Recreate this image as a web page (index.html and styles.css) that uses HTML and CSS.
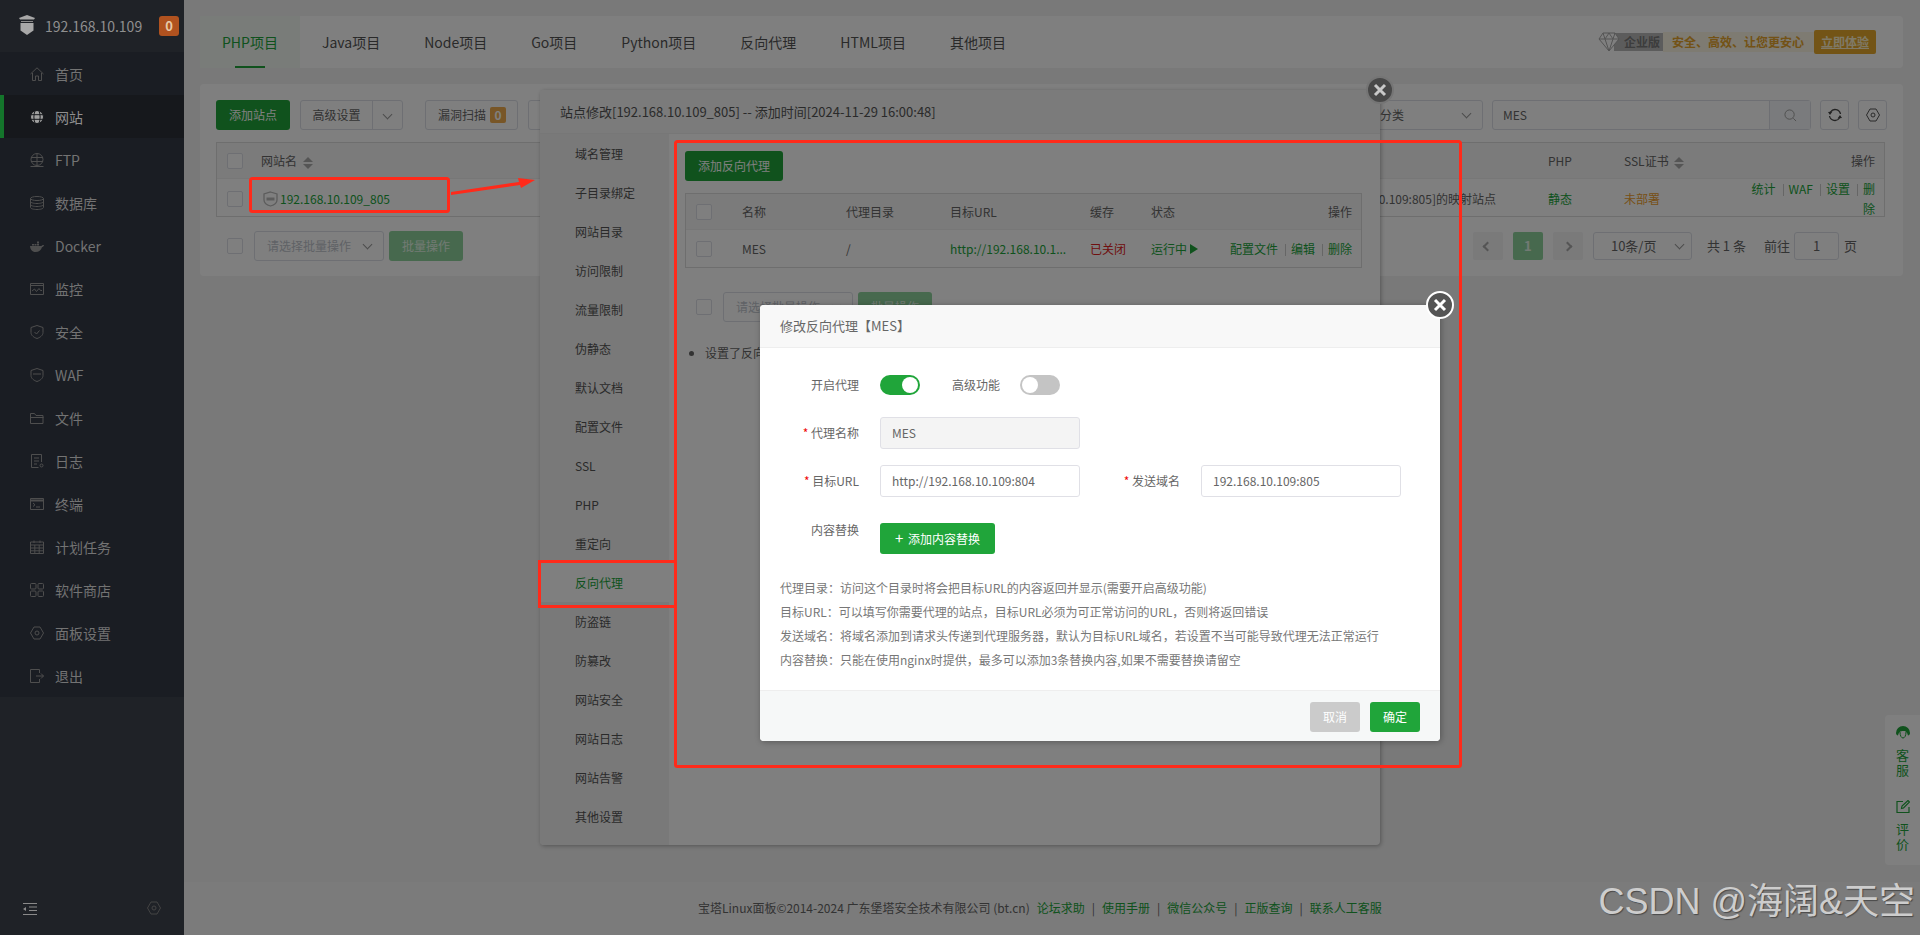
FILE: index.html
```html
<!DOCTYPE html>
<html lang="zh-CN">
<head>
    <meta charset="UTF-8">
    <title>网站管理 - 反向代理</title>
    <link rel="stylesheet" href="styles.css">
</head>
<body>
<div class="app">
    <aside class="sidebar">
        <div class="side-head">
            <svg class="logo" viewBox="0 0 18 20" width="18" height="20"><path d="M1 3 9 0l8 3-1 1.500H2z" fill="#a8a8a8"/><path d="M3 6h12v1H3z" fill="#8a8a8a"/><path d="M2.500 8h13v7.500L9 20l-6.500-4.500z" fill="#a8a8a8"/></svg>
            <span class="side-ip">192.168.10.109</span>
            <span class="side-badge">0</span>
        </div>
        <nav class="nav">
            <a class="nav-item"><svg viewBox="0 0 14 14"><path d="M.5 7 7 .8 13.500 7M2.500 6v7.500h3V9h3v4.500h3V6"/></svg>首页</a>
            <a class="nav-item active"><svg viewBox="0 0 14 14"><circle cx="7" cy="7" r="6.500" fill="currentColor"/><path d="M.5 4.700h13M.5 9.300h13M5 .8C3.500 5 3.500 9 5 13.200M9 .8c1.500 4.200 1.500 8.400 0 12.400" stroke="#16181c"/></svg>网站</a>
            <a class="nav-item"><svg viewBox="0 0 14 14"><circle cx="7" cy="6.500" r="6"/><path d="M1 4.500h12M1 8.500h12M7 .5v12M.5 13.500h13"/></svg>FTP</a>
            <a class="nav-item"><svg viewBox="0 0 14 14"><ellipse cx="7" cy="2.500" rx="6.500" ry="2"/><path d="M.5 2.500v9c0 1.100 2.900 2 6.500 2s6.500-.9 6.500-2v-9M.5 5.500c0 1.100 2.900 2 6.500 2s6.500-.9 6.500-2M.5 8.500c0 1.100 2.900 2 6.500 2s6.500-.9 6.500-2"/></svg>数据库</a>
            <a class="nav-item"><svg viewBox="0 0 14 14"><path d="M0 7h11.500c.5-1 1.200-1.300 2.500-1-.3 1.500-1 2-2 2.200C11 11 9 13 5.500 13 2 13 .3 10.500 0 7zM2 5h2v1.500H2zM4.500 5h2v1.500h-2zM7 5h2v1.500H7zM7 2.500h2V4.500H7z" fill="currentColor" stroke="none"/></svg>Docker</a>
            <a class="nav-item"><svg viewBox="0 0 14 14"><path d="M.5 1.500h13v11H.5zM.5 3.500h13M2 9l2.500-2 2 2.500L9 6.500l1.500 2H12"/></svg>监控</a>
            <a class="nav-item"><svg viewBox="0 0 14 14"><path d="M7 .5 13 2.500v5c0 3-3 5-6 6-3-1-6-3-6-6v-5z"/><path d="m4.500 7 2 2 3-3.500"/></svg>安全</a>
            <a class="nav-item"><svg viewBox="0 0 14 14"><path d="M7 .5 13 2.500v5c0 3-3 5-6 6-3-1-6-3-6-6v-5z"/><path d="M3 6h8"/></svg>WAF</a>
            <a class="nav-item"><svg viewBox="0 0 14 14"><path d="M.5 12.500v-10h4l1.500 2h7v8zM.5 6.500h13"/></svg>文件</a>
            <a class="nav-item"><svg viewBox="0 0 14 14"><path d="M11.500 8V.5h-10v13h7M4 4h5M4 7h5M4 10h3"/><circle cx="11.500" cy="11.500" r="1.500"/></svg>日志</a>
            <a class="nav-item"><svg viewBox="0 0 14 14"><path d="M.5 1.500h13v11H.5z"/><path d="M.5 3.500h13" stroke-width="2"/><path d="m3 6 2 1.800L3 9.500M6 10h4"/></svg>终端</a>
            <a class="nav-item"><svg viewBox="0 0 14 14"><path d="M.5 2h13v11.500H.5zM.5 5h13M4 .5V3M10 .5V3M.5 8h13M.5 10.800h13M4.800 5v8.500M9.200 5v8.500"/></svg>计划任务</a>
            <a class="nav-item"><svg viewBox="0 0 14 14"><rect x=".5" y=".5" width="5.500" height="5.500" rx="1"/><rect x="8" y=".5" width="5.500" height="5.500" rx="1"/><rect x=".5" y="8" width="5.500" height="5.500" rx="1"/><rect x="8" y="8" width="5.500" height="5.500" rx="1"/></svg>软件商店</a>
            <a class="nav-item"><svg viewBox="0 0 14 14"><path d="M4 1h6l3.500 6-3.500 6H4L.5 7z"/><circle cx="7" cy="7" r="2"/></svg>面板设置</a>
            <a class="nav-item"><svg viewBox="0 0 14 14"><path d="M9.500 4V.5h-9v13h9V10M6 7h7.500M11 4.500 13.500 7 11 9.500"/></svg>退出</a>
        </nav>
        <div class="side-foot">
            <svg viewBox="0 0 14 12" width="14" height="12"><path d="M0 .5h14M6 4h8M6 7.500h8M0 11.500h14" stroke="#8a8a8a" fill="none"/><path d="M3 4v4L0 6z" fill="#8a8a8a"/></svg>
            <svg viewBox="0 0 14 14" width="14" height="14"><path d="M4 1h6l3.500 6-3.500 6H4L.5 7z" stroke="#444" fill="none"/><circle cx="7" cy="7" r="2" stroke="#444" fill="none"/></svg>
        </div>
    </aside>

    <div class="main">
        <div class="content">
            <div class="tabs">
                <a class="tab active">PHP项目</a>
                <a class="tab">Java项目</a>
                <a class="tab">Node项目</a>
                <a class="tab">Go项目</a>
                <a class="tab">Python项目</a>
                <a class="tab">反向代理</a>
                <a class="tab">HTML项目</a>
                <a class="tab">其他项目</a>
                <div class="promo">
                    <svg class="promo-gem" viewBox="0 0 22 22" width="22" height="22"><path d="M5 2h12l4 6-10 12L1 8zM1 8h20M7 8l4 12 4-12M5 2l2 6 4-6 4 6 2-6" fill="#7f7f7f" stroke="#555"/></svg>
                    <span class="promo-tag">企业版</span>
                    <span class="promo-text">安全、高效、让您更安心</span>
                    <a class="promo-btn">立即体验</a>
                </div>
            </div>

            <div class="panel">
                <div class="toolbar">
                    <button class="btn btn-green">添加站点</button>
                    <div class="split"><span class="split-label">高级设置</span><span class="split-arrow"><i class="chev"></i></span></div>
                    <button class="btn btn-plain scan">漏洞扫描<b class="scan-count">0</b></button>
                    <button class="btn btn-plain fw">防火墙</button>
                    <div class="select cat-select">全部分类<i class="chev"></i></div>
                    <div class="search"><span class="search-text">MES</span><span class="search-btn"><svg viewBox="0 0 14 14" width="13" height="13"><circle cx="6" cy="6" r="5" fill="none" stroke="#999"/><path d="m10 10 3 3" stroke="#999"/></svg></span></div>
                    <button class="icon-btn"><svg viewBox="0 0 14 14" width="14" height="14"><path d="M12.500 6A5.500 5.500 0 0 0 2.500 4M1.500 8a5.500 5.500 0 0 0 10 2" fill="none" stroke="#444" stroke-width="1.300"/><path d="m0 4 4.500-.5L2 7zM14 10l-4.500.5L12 7z" fill="#444"/></svg></button>
                    <button class="icon-btn"><svg viewBox="0 0 14 14" width="14" height="14"><path d="M4 1h6l3.500 6-3.500 6H4L.5 7z" fill="none" stroke="#555"/><circle cx="7" cy="7" r="2" fill="none" stroke="#555"/></svg></button>
                </div>

                <div class="sites">
                    <div class="site-row site-head">
                        <span><i class="check"></i></span>
                        <span>网站名 <i class="sort"></i></span>
                        <span></span>
                        <span>PHP</span>
                        <span>SSL证书 <i class="sort"></i></span>
                        <span class="right">操作</span>
                    </div>
                    <div class="site-row">
                        <span><i class="check"></i></span>
                        <span class="site-name">
                            <svg viewBox="0 0 15 16" width="15" height="16"><path d="M7.500 1 14 3v6c0 3-3 5-6.500 6C4 14 1 12 1 9V3z" fill="none" stroke="#b8b8b8" stroke-width="1.300"/><path d="M3.500 6.500h8v3h-8z" fill="#b8b8b8"/></svg>
                            <a class="link">192.168.10.109_805</a>
                        </span>
                        <span class="remark">[192.168.10.109:805]的映射站点</span>
                        <a class="link">静态</a>
                        <span class="warn">未部署</span>
                        <span class="right ops"><a class="link">统计</a><i></i><a class="link">WAF</a><i></i><a class="link">设置</a><i></i><a class="link">删除</a></span>
                    </div>
                </div>

                <div class="list-foot">
                    <i class="check"></i>
                    <div class="select batch-select">请选择批量操作<i class="chev"></i></div>
                    <button class="btn btn-faded">批量操作</button>
                    <div class="pager">
                        <span class="page-btn"><i class="chev chev-l"></i></span>
                        <span class="page-btn current">1</span>
                        <span class="page-btn"><i class="chev chev-r"></i></span>
                        <div class="select size-select">10条/页<i class="chev"></i></div>
                        <span class="page-total">共 1 条</span>
                        <span class="page-goto">前往</span>
                        <span class="page-input">1</span>
                        <span class="page-unit">页</span>
                    </div>
                </div>
            </div>
        </div>

        <footer class="footer">
            宝塔Linux面板©2014-2024 广东堡塔安全技术有限公司 (bt.cn)<a>论坛求助</a>|<a>使用手册</a>|<a>微信公众号</a>|<a>正版查询</a>|<a>联系人工客服</a>
        </footer>
    </div>
</div>

<div class="float-bar">
    <svg viewBox="0 0 14 14" width="14" height="14"><path d="M7 0a7 7 0 0 0-7 7c0 1.500 1 2.500 2 2.500 1-4 3-4.500 5-4.500s4 .5 5 4.500c1 0 2-1 2-2.500a7 7 0 0 0-7-7z" fill="#20a53a"/><path d="M4 6c0 4 1.500 6 3 6s3-2 3-6" fill="none" stroke="#20a53a"/></svg>
    <span>客<br>服</span>
    <svg class="float-edit" viewBox="0 0 14 14" width="14" height="14"><path d="M7 1.500H1v11h12V7M5.500 8.500 6 6l6-5.500 1.500 1.500L7.500 8z" fill="none" stroke="#20a53a" stroke-width="1.200"/></svg>
    <span>评<br>价</span>
</div>

<section class="site-win">
    <div class="site-title">站点修改[192.168.10.109_805] -- 添加时间[2024-11-29 16:00:48]</div>
    <div class="site-body">
        <ul class="site-menu">
            <li>域名管理</li><li>子目录绑定</li><li>网站目录</li><li>访问限制</li><li>流量限制</li><li>伪静态</li>
            <li>默认文档</li><li>配置文件</li><li>SSL</li><li>PHP</li><li>重定向</li><li class="active">反向代理</li>
            <li>防盗链</li><li>防篡改</li><li>网站安全</li><li>网站日志</li><li>网站告警</li><li>其他设置</li>
        </ul>
        <div class="site-pane">
            <button class="btn btn-green add-proxy">添加反向代理</button>
            <div class="proxies">
                <div class="proxy-row proxy-head">
                    <span><i class="check"></i></span><span>名称</span><span>代理目录</span><span>目标URL</span><span>缓存</span><span>状态</span><span class="right">操作</span>
                </div>
                <div class="proxy-row">
                    <span><i class="check"></i></span><span>MES</span><span>/</span>
                    <a class="link">http://192.168.10.1...</a>
                    <span class="off">已关闭</span>
                    <a class="link">运行中 <b class="play"></b></a>
                    <span class="right ops"><a class="link">配置文件</a><i></i><a class="link">编辑</a><i></i><a class="link">删除</a></span>
                </div>
            </div>
            <div class="proxy-batch">
                <i class="check"></i>
                <div class="select batch-select">请选择批量操作<i class="chev"></i></div>
                <button class="btn btn-faded">批量操作</button>
            </div>
            <ul class="tips"><li>设置了反向代理后，无法再开启网站缓存</li></ul>
        </div>
    </div>
</section>

<div class="shade"></div>

<svg class="win-close site-close" viewBox="0 0 30 30" width="30" height="30"><circle cx="15" cy="15" r="13" fill="#484848" stroke="#757575" stroke-width="2"/><path d="m10 10 10 10M20 10 10 20" stroke="#c8c8c8" stroke-width="3"/></svg>

<section class="proxy-win">
    <div class="proxy-title">修改反向代理【MES】</div>
    <div class="proxy-form">
        <div class="form-row">
            <label class="form-label">开启代理</label>
            <span class="switch on"></span>
            <label class="form-label-2 plain">高级功能</label>
            <span class="switch"></span>
        </div>
        <div class="form-row name-row">
            <label class="form-label"><em>*</em> 代理名称</label>
            <div class="input disabled">MES</div>
        </div>
        <div class="form-row url-row">
            <label class="form-label"><em>*</em> 目标URL</label>
            <div class="input">http://192.168.10.109:804</div>
            <label class="form-label-2"><em>*</em> 发送域名</label>
            <div class="input">192.168.10.109:805</div>
        </div>
        <div class="form-row add-row">
            <label class="form-label">内容替换</label>
            <button class="btn-add"><span class="plus">+</span> 添加内容替换</button>
        </div>
        <ul class="help">
            <li>代理目录：访问这个目录时将会把目标URL的内容返回并显示(需要开启高级功能)</li>
            <li>目标URL：可以填写你需要代理的站点，目标URL必须为可正常访问的URL，否则将返回错误</li>
            <li>发送域名：将域名添加到请求头传递到代理服务器，默认为目标URL域名，若设置不当可能导致代理无法正常运行</li>
            <li>内容替换：只能在使用nginx时提供，最多可以添加3条替换内容,如果不需要替换请留空</li>
        </ul>
    </div>
    <div class="proxy-foot">
        <button class="foot-btn cancel">取消</button>
        <button class="foot-btn ok">确定</button>
    </div>
</section>

<svg class="win-close proxy-close" viewBox="0 0 30 30" width="30" height="30"><circle cx="15" cy="15" r="13" fill="#555" stroke="#fff" stroke-width="2"/><path d="m10 10 10 10M20 10 10 20" stroke="#fff" stroke-width="3"/></svg>

<svg class="notes" viewBox="0 0 1920 935" width="1920" height="935">
    <rect x="250.500" y="178.500" width="198" height="33" rx="2"/>
    <rect x="675.500" y="141.500" width="785" height="625" rx="2"/>
    <path d="M675 561.500H539.500v45H675"/>
    <polygon class="arrow" points="451,192 519,182 518,178 535,180 521,188 520,185 451,195"/>
</svg>

<div class="watermark">CSDN @海阔&amp;天空</div>
</body>
</html>
```

FILE: styles.css
```css
* {
    box-sizing: border-box;
}

html, body {
    margin: 0;
    height: 935px;
    overflow: hidden;
}

body {
    position: relative;
    font-family: "Noto Sans CJK SC", "Liberation Sans", sans-serif;
    font-size: 12px;
    line-height: 20px;
    color: #666;
    background: #f2f2f2;
}

a {
    text-decoration: none;
}

ul {
    margin: 0;
    padding: 0;
    list-style: none;
}

i {
    font-style: normal;
}

button {
    font: inherit;
    cursor: pointer;
}

.app {
    display: flex;
    height: 935px;
}

/* sidebar keeps its final colours, the shade only starts right of it */
.sidebar {
    width: 184px;
    flex: none;
    display: flex;
    flex-direction: column;
    background: #1f2227;
}

.side-head {
    height: 52px;
    display: flex;
    align-items: center;
    padding-left: 18px;
}

.logo {
    margin-top: -2px;
}

.side-ip {
    margin-left: 9px;
    font-size: 14px;
    color: #8f8f8f;
}

.side-badge {
    margin-left: auto;
    margin-right: 5px;
    width: 20px;
    height: 20px;
    border-radius: 3px;
    background: #b0521f;
    color: #e6c9a8;
    font-size: 13px;
    font-weight: 700;
    line-height: 20px;
    text-align: center;
}

.nav {
    height: 645px;
    background: #1a1d23;
}

.nav-item {
    display: flex;
    align-items: center;
    height: 43px;
    padding-left: 30px;
    font-size: 14px;
    color: #737373;
    border-left: 0 solid #14752b;
}

.nav-item svg {
    width: 14px;
    height: 14px;
    margin-right: 11px;
    fill: none;
    stroke: #4e4e4e;
    stroke-width: 1;
}

.nav-item.active {
    background: #16181c;
    color: #8f8f8f;
    border-left-width: 4px;
    padding-left: 26px;
}

.nav-item.active svg {
    color: #a0a0a0;
    stroke: #16181c;
}

.nav-item:nth-child(5) svg {
    color: #4e4e4e;
}

.side-foot {
    flex: 1;
    display: flex;
    justify-content: space-between;
    align-items: flex-end;
    padding: 0 23px 20px;
}

.main {
    flex: 1;
    display: flex;
    flex-direction: column;
}

.content {
    flex: 1;
    padding: 16px 17px 0 16px;
}

.tabs {
    display: flex;
    height: 52px;
    background: #fff;
    border-radius: 4px;
    margin-bottom: 16px;
}

.tab {
    position: relative;
    padding: 0 22px;
    font-size: 14px;
    line-height: 52px;
    color: #555;
}

.tab.active {
    color: #20a53a;
    background: #f2f8f3;
}

.tab.active::after {
    content: "";
    position: absolute;
    left: 35px;
    bottom: 0;
    width: 30px;
    height: 2px;
    background: #20a53a;
}

.promo {
    margin-left: auto;
    margin-right: 27px;
    align-self: center;
    display: flex;
    align-items: center;
    height: 24px;
    position: relative;
}

.promo-gem {
    position: absolute;
    left: 9px;
    top: 1px;
    z-index: 1;
}

.promo-tag {
    margin-left: 25px;
    width: 49px;
    height: 18px;
    line-height: 18px;
    padding-left: 10px;
    background: #b8b8b8;
    color: #7a7a7a;
    font-weight: 700;
}

.promo-text {
    display: block;
    height: 20px;
    padding: 0 10px 0 9px;
    background: #fcf6e4;
    color: #e6a52c;
    font-weight: 700;
    margin-right: 0;
}

.promo-btn {
    width: 62px;
    height: 24px;
    border-radius: 2px;
    background: #e6a92c;
    color: #fff3cf;
    font-weight: 700;
    line-height: 24px;
    text-align: center;
    text-decoration: underline;
}

.panel {
    height: 192px;
    padding: 16px;
    background: #fff;
    border-radius: 4px;
}

.toolbar {
    display: flex;
    height: 30px;
}

.btn {
    height: 30px;
    border-radius: 3px;
    border: 1px solid transparent;
    padding: 0;
    line-height: 28px;
}

.btn-green {
    width: 74px;
    background: #20a53a;
    color: #fff;
}

.btn-plain {
    background: #fff;
    border-color: #dcdfe6;
    color: #666;
}

.btn-faded {
    width: 74px;
    margin-left: 5px;
    background: #8fd29d;
    color: #e4f5e7;
}

.split {
    display: flex;
    width: 103px;
    height: 30px;
    margin-left: 10px;
    border: 1px solid #dcdfe6;
    border-radius: 3px;
    line-height: 28px;
}

.split-label {
    width: 72px;
    text-align: center;
    border-right: 1px solid #dcdfe6;
}

.split-arrow {
    flex: 1;
    text-align: center;
}

.chev {
    display: inline-block;
    width: 7px;
    height: 7px;
    border-right: 1px solid #999;
    border-bottom: 1px solid #999;
    transform: rotate(45deg);
    position: relative;
    top: -2px;
}

.chev-l {
    transform: rotate(135deg);
    border-color: #aaa;
    border-width: 2px;
    top: 0;
}

.chev-r {
    transform: rotate(-45deg);
    border-color: #aaa;
    border-width: 2px;
    top: 0;
}

.scan {
    width: 93px;
    margin-left: 22px;
    padding-left: 12px;
    text-align: left;
}

.scan-count {
    display: inline-block;
    width: 16px;
    height: 16px;
    margin-left: 4px;
    border-radius: 2px;
    background: #f0ad4e;
    color: #fff;
    line-height: 16px;
    text-align: center;
}

.fw {
    width: 80px;
    margin-left: 10px;
}

.select {
    display: flex;
    justify-content: space-between;
    align-items: center;
    height: 30px;
    padding: 0 12px;
    border: 1px solid #dcdfe6;
    border-radius: 3px;
    background: #fff;
}

.cat-select {
    width: 140px;
    margin-left: auto;
    font-size: 12px;
}

.search {
    display: flex;
    width: 319px;
    height: 30px;
    margin-left: 9px;
    border: 1px solid #dcdfe6;
    border-radius: 3px;
    line-height: 28px;
}

.search-text {
    flex: 1;
    padding-left: 10px;
}

.search-btn {
    display: flex;
    align-items: center;
    justify-content: center;
    width: 41px;
    background: #f5f7fa;
    border-left: 1px solid #dcdfe6;
}

.icon-btn {
    display: flex;
    align-items: center;
    justify-content: center;
    width: 29px;
    height: 30px;
    margin-left: 9px;
    padding: 0;
    background: #fff;
    border: 1px solid #dcdfe6;
    border-radius: 3px;
}

.sites {
    width: 1669px;
    margin-top: 12px;
    border: 1px solid #ddd;
}

.site-row {
    display: grid;
    grid-template-columns: 44px 260px 1fr 76px 120px 131px;
    align-items: center;
    height: 37px;
    padding-right: 9px;
}

.site-head {
    height: 36px;
    background: #f6f6f6;
    border-bottom: 1px solid #eee;
}

.check {
    display: block;
    width: 16px;
    height: 16px;
    margin-left: 10px;
    background: #fff;
    border: 1px solid #dcdfe6;
    border-radius: 2px;
}

.sort {
    display: inline-block;
    width: 0;
    height: 0;
    margin-left: 3px;
    border: 5px solid transparent;
    border-bottom: 5px solid #aaa;
    border-top: 0;
    position: relative;
    top: -4px;
}

.sort::after {
    content: "";
    position: absolute;
    left: -5px;
    top: 7px;
    border: 5px solid transparent;
    border-top: 5px solid #aaa;
    border-bottom: 0;
}

.site-name {
    display: flex;
    align-items: center;
    gap: 2px;
    margin-left: 2px;
}

.link {
    color: #20a53a;
}

.remark {
    text-align: right;
    padding-right: 52px;
}

.warn {
    color: #ef9f2e;
}

.right {
    text-align: right;
}

.ops i {
    display: inline-block;
    width: 1px;
    height: 12px;
    margin: 0 5px 0 7px;
    background: #ccc;
    vertical-align: -2px;
}

.list-foot {
    display: flex;
    align-items: center;
    margin-top: 14px;
}

.list-foot > .check {
    margin-left: 11px;
}

.batch-select {
    width: 130px;
    margin-left: 11px;
    color: #c0c4cc;
}

.pager {
    margin-left: auto;
    margin-right: 30px;
    display: flex;
    align-items: center;
}

.page-btn {
    display: flex;
    align-items: center;
    justify-content: center;
    width: 30px;
    height: 28px;
    margin-right: 10px;
    background: #f4f4f5;
    border-radius: 2px;
}

.page-btn.current {
    background: #8fd29d;
    color: #e4f5e7;
    font-size: 13px;
    font-weight: 700;
}

.size-select {
    width: 99px;
    height: 28px;
    color: #666;
    font-size: 13px;
    padding: 0 8px 0 17px;
}

.page-total {
    margin-left: 15px;
    font-size: 13px;
}

.page-goto {
    margin-left: 18px;
    font-size: 13px;
}

.page-input {
    width: 45px;
    height: 28px;
    margin-left: 4px;
    border: 1px solid #dcdfe6;
    border-radius: 3px;
    line-height: 26px;
    text-align: center;
    font-size: 13px;
}

.page-unit {
    margin-left: 5px;
    font-size: 13px;
}

.footer {
    height: 53px;
    padding-left: 514px;
    background: #f6f6f6;
    line-height: 52px;
    color: #666;
}

.footer a {
    margin: 0 7px;
    color: #20a53a;
}

.float-bar {
    position: absolute;
    left: 1885px;
    top: 715px;
    width: 35px;
    height: 150px;
    display: flex;
    flex-direction: column;
    align-items: center;
    padding-top: 11px;
    background: #fff;
    border-radius: 4px 0 0 4px;
    color: #20a53a;
    font-size: 13px;
    line-height: 15px;
}

.float-bar span {
    margin-top: 7px;
}

.float-edit {
    margin-top: 23px;
}

.site-win {
    position: absolute;
    left: 540px;
    top: 90px;
    width: 840px;
    height: 755px;
    background: #fff;
    border-radius: 4px;
    box-shadow: 1px 1px 4px rgba(0, 0, 0, 0.3);
    overflow: hidden;
}

.site-title {
    height: 44px;
    padding-left: 20px;
    background: #f6f6f6;
    border-bottom: 1px solid #eee;
    font-size: 13px;
    line-height: 44px;
    color: #555;
}

.site-body {
    display: flex;
    height: 711px;
}

.site-menu {
    width: 129px;
    flex: none;
    background: #f2f2f2;
}

.site-menu li {
    height: 39px;
    padding-left: 35px;
    line-height: 39px;
    color: #555;
}

.site-menu li.active {
    background: #fff;
    color: #20a53a;
}

.site-pane {
    flex: 1;
    padding: 17px 18px 0 16px;
}

.add-proxy {
    display: block;
    width: 98px;
}

.proxies {
    margin-top: 12px;
    border: 1px solid #ddd;
}

.proxy-row {
    display: grid;
    grid-template-columns: 56px 104px 104px 140px 61px 71px 1fr;
    align-items: center;
    height: 37px;
    padding-right: 9px;
}

.proxy-head {
    height: 36px;
    background: #f6f6f6;
    border-bottom: 1px solid #eee;
}

.off {
    color: #e02020;
}

.play {
    display: inline-block;
    width: 0;
    height: 0;
    border-left: 8px solid #20a53a;
    border-top: 5px solid transparent;
    border-bottom: 5px solid transparent;
}

.proxy-batch {
    display: flex;
    align-items: center;
    margin-top: 24px;
}

.proxy-batch .check {
    margin-left: 11px;
}

.tips {
    margin-top: 20px;
    padding-left: 20px;
    line-height: 22px;
    white-space: nowrap;
}

.tips li {
    list-style: disc;
}

.shade {
    position: absolute;
    left: 184px;
    top: 0;
    right: 0;
    bottom: 0;
    background: rgba(0, 0, 0, 0.5);
}

.win-close {
    position: absolute;
}

.site-close {
    left: 1365px;
    top: 75px;
}

.proxy-close {
    left: 1425px;
    top: 290px;
}

.proxy-win {
    position: absolute;
    left: 760px;
    top: 305px;
    width: 680px;
    height: 436px;
    display: flex;
    flex-direction: column;
    background: #fff;
    border-radius: 4px;
    box-shadow: 1px 1px 6px rgba(0, 0, 0, 0.3);
    overflow: hidden;
}

.proxy-title {
    height: 43px;
    padding-left: 20px;
    background: #f8f8f8;
    border-bottom: 1px solid #eee;
    font-size: 13px;
    line-height: 42px;
    color: #666;
}

.proxy-form {
    flex: 1;
    padding-top: 27px;
}

.form-row {
    display: flex;
    align-items: center;
}

.form-label {
    width: 99px;
    margin-right: 21px;
    text-align: right;
    color: #666;
}

.form-label em {
    font-style: normal;
    color: #ef0808;
}

.form-label-2 {
    width: 79px;
    margin-left: 21px;
    margin-right: 21px;
    text-align: right;
}

.form-label-2 em {
    font-style: normal;
    color: #ef0808;
}

.form-label-2.plain {
    width: 48px;
    margin-left: 32px;
    margin-right: 20px;
}

.switch {
    position: relative;
    width: 40px;
    height: 20px;
    border-radius: 10px;
    background: #c4c4c4;
}

.switch::after {
    content: "";
    position: absolute;
    left: 2px;
    top: 2px;
    width: 16px;
    height: 16px;
    border-radius: 50%;
    background: #fff;
}

.switch.on {
    background: #20a53a;
}

.switch.on::after {
    left: 22px;
}

.input {
    width: 200px;
    height: 32px;
    padding-left: 11px;
    border: 1px solid #e0e0e6;
    border-radius: 3px;
    line-height: 30px;
}

.input.disabled {
    background: #f4f4f4;
}

.name-row {
    margin-top: 22px;
}

.url-row {
    margin-top: 16px;
}

.add-row {
    margin-top: 26px;
    align-items: flex-start;
}

.add-row .form-label {
    line-height: 14px;
}

.btn-add {
    width: 115px;
    height: 31px;
    padding: 0;
    border: 0;
    border-radius: 3px;
    background: #20a53a;
    color: #fff;
}

.plus {
    font-size: 15px;
    margin-right: 2px;
}

.help {
    margin: 22px 0 0 20px;
    line-height: 24px;
    color: #777;
    white-space: nowrap;
}

.proxy-foot {
    height: 51px;
    display: flex;
    justify-content: flex-end;
    gap: 10px;
    padding: 11px 20px 0;
    background: #f6f8f8;
    border-top: 1px solid #eee;
}

.foot-btn {
    width: 50px;
    height: 30px;
    padding: 0;
    border: 0;
    border-radius: 3px;
    color: #fff;
}

.cancel {
    background: #cbcbcb;
}

.ok {
    background: #20a53a;
}

.notes {
    position: absolute;
    left: 0;
    top: 0;
    fill: none;
    stroke: #ff2a1a;
    stroke-width: 3;
}

.notes .arrow {
    fill: #ff2a1a;
    stroke: none;
}

.watermark {
    position: absolute;
    right: 5px;
    top: 880px;
    font-family: "Liberation Sans", "Noto Sans CJK SC", sans-serif;
    font-size: 36px;
    line-height: 44px;
    color: #cdcdcd;
    text-shadow: 1px 1px 1px #4a4a4a;
}
```
